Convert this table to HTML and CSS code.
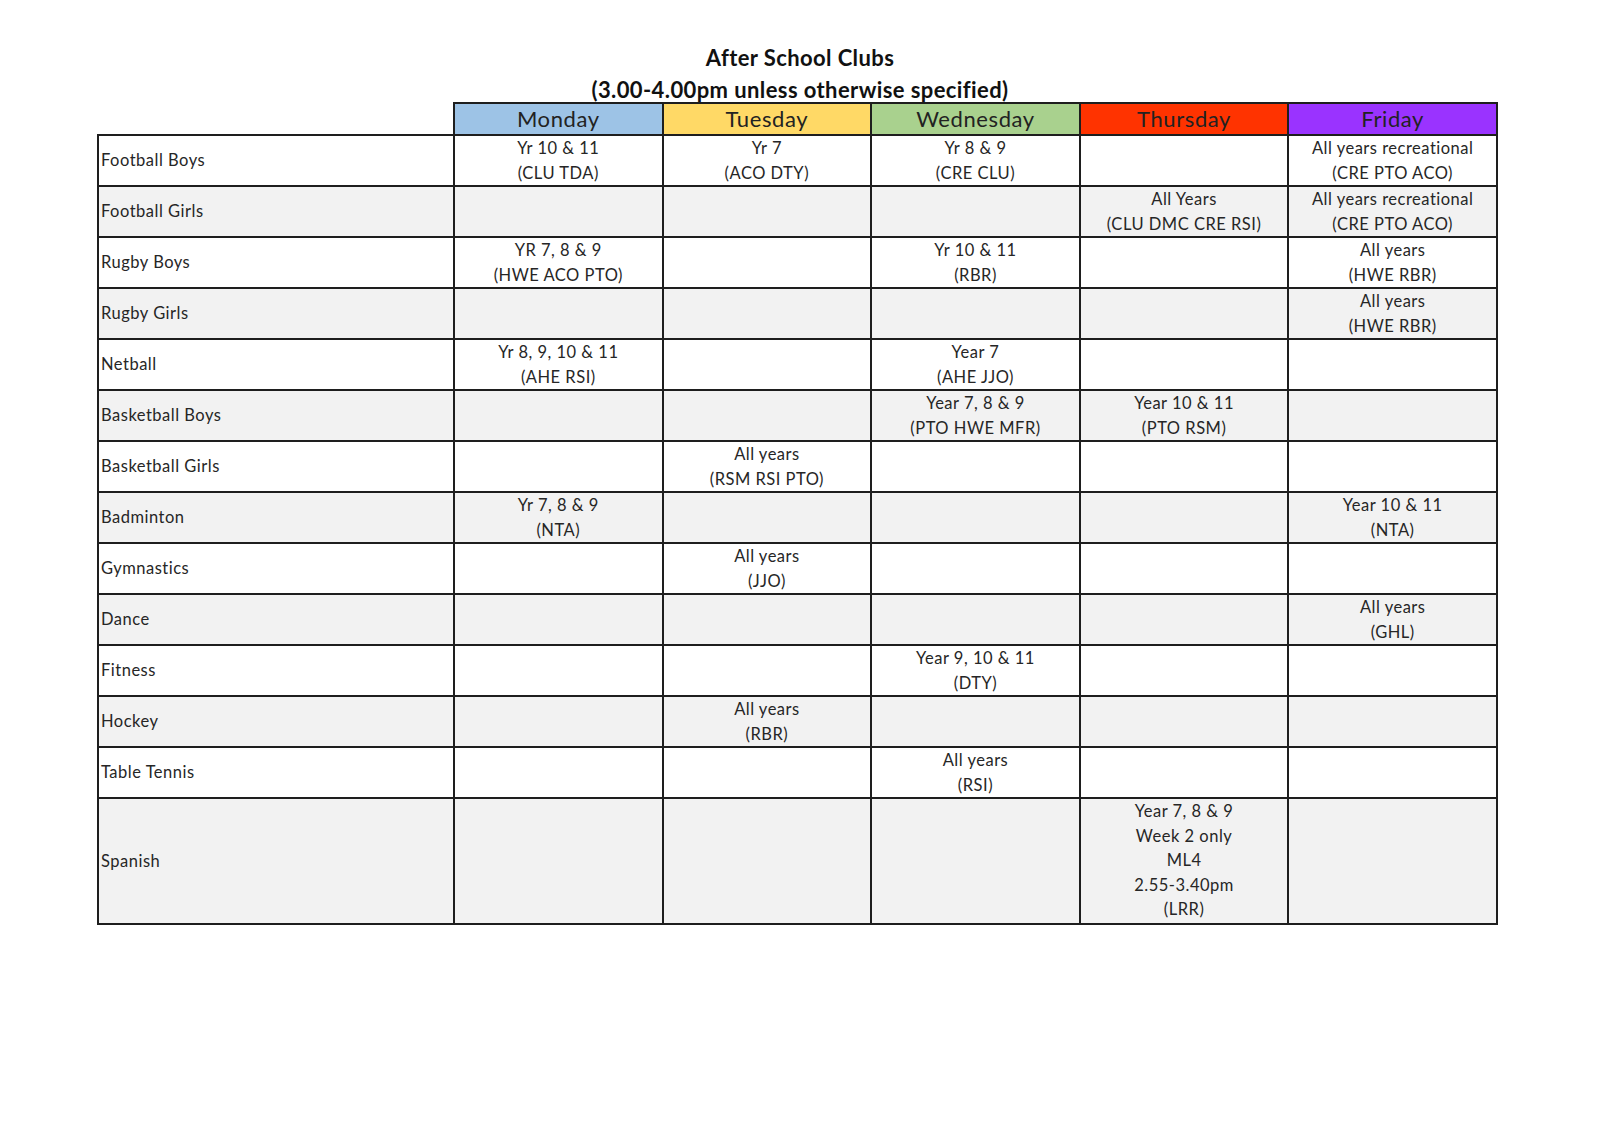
FILE: index.html
```html
<!DOCTYPE html>
<html lang="en">
<head>
<meta charset="utf-8">
<title>After School Clubs</title>
<link rel="stylesheet" href="styles.css">
</head>
<body>
<div class="sheet">
  <div class="title">
    <div>After School Clubs</div>
    <div>(3.00-4.00pm unless otherwise specified)</div>
  </div>
  <table class="clubs">
    <colgroup>
      <col class="c-label"><col class="c-day"><col class="c-day"><col class="c-day"><col class="c-day"><col class="c-day">
    </colgroup>
    <thead>
      <tr>
        <th class="corner"></th>
        <th class="mon">Monday</th>
        <th class="tue">Tuesday</th>
        <th class="wed">Wednesday</th>
        <th class="thu">Thursday</th>
        <th class="fri">Friday</th>
      </tr>
    </thead>
    <tbody>
      <tr><td class="label">Football Boys</td><td>Yr 10 &amp; 11<br>(CLU TDA)</td><td>Yr 7<br>(ACO DTY)</td><td>Yr 8 &amp; 9<br>(CRE CLU)</td><td></td><td>All years recreational<br>(CRE PTO ACO)</td></tr>
      <tr><td class="label">Football Girls</td><td></td><td></td><td></td><td>All Years<br>(CLU DMC CRE RSI)</td><td>All years recreational<br>(CRE PTO ACO)</td></tr>
      <tr><td class="label">Rugby Boys</td><td>YR 7, 8 &amp; 9<br>(HWE ACO PTO)</td><td></td><td>Yr 10 &amp; 11<br>(RBR)</td><td></td><td>All years<br>(HWE RBR)</td></tr>
      <tr><td class="label">Rugby Girls</td><td></td><td></td><td></td><td></td><td>All years<br>(HWE RBR)</td></tr>
      <tr><td class="label">Netball</td><td>Yr 8, 9, 10 &amp; 11<br>(AHE RSI)</td><td></td><td>Year 7<br>(AHE JJO)</td><td></td><td></td></tr>
      <tr><td class="label">Basketball Boys</td><td></td><td></td><td>Year 7, 8 &amp; 9<br>(PTO HWE MFR)</td><td>Year 10 &amp; 11<br>(PTO RSM)</td><td></td></tr>
      <tr><td class="label">Basketball Girls</td><td></td><td>All years<br>(RSM RSI PTO)</td><td></td><td></td><td></td></tr>
      <tr><td class="label">Badminton</td><td>Yr 7, 8 &amp; 9<br>(NTA)</td><td></td><td></td><td></td><td>Year 10 &amp; 11<br>(NTA)</td></tr>
      <tr><td class="label">Gymnastics</td><td></td><td>All years<br>(JJO)</td><td></td><td></td><td></td></tr>
      <tr><td class="label">Dance</td><td></td><td></td><td></td><td></td><td>All years<br>(GHL)</td></tr>
      <tr><td class="label">Fitness</td><td></td><td></td><td>Year 9, 10 &amp; 11<br>(DTY)</td><td></td><td></td></tr>
      <tr><td class="label">Hockey</td><td></td><td>All years<br>(RBR)</td><td></td><td></td><td></td></tr>
      <tr><td class="label">Table Tennis</td><td></td><td></td><td>All years<br>(RSI)</td><td></td><td></td></tr>
      <tr class="tall"><td class="label">Spanish</td><td></td><td></td><td></td><td>Year 7, 8 &amp; 9<br>Week 2 only<br>ML4<br>2.55-3.40pm<br>(LRR)</td><td></td></tr>
    </tbody>
  </table>
</div>
</body>
</html>
```
FILE: styles.css
```css
html, body {
  margin: 0;
  padding: 0;
  background: #ffffff;
}

body {
  font-family: "Lato", "Open Sans", "Liberation Sans", sans-serif;
  color: #1c1c1c;
}

.sheet {
  width: 1399px;
  margin-left: 97px;
  padding-top: 42px;
}

.title {
  text-align: center;
  font-weight: bold;
  font-size: 22px;
  letter-spacing: 0.4px;
  line-height: 31.5px;
  color: #111;
  padding-left: 7px;
  margin-bottom: -3px;
}

.clubs {
  border-collapse: collapse;
  table-layout: fixed;
  width: 1399px;
}

.c-label { width: 356px; }
.c-day { width: 208.6px; }

.clubs th {
  height: 30px;
  padding: 0;
  font-weight: normal;
  font-size: 22px;
  letter-spacing: 0.6px;
  line-height: 30px;
  text-align: center;
  border: 2px solid #1e1e1e;
  color: #222;
}

.clubs th.corner {
  border-top: none;
  border-left: none;
  background: transparent;
}

.mon { background: #9dc3e6; }
.tue { background: #ffd966; }
.wed { background: #a9d18e; }
.thu { background: #ff3300; }
.fri { background: #9a33ff; }

.clubs td {
  height: 48px;
  padding: 0;
  border: 2px solid #1e1e1e;
  text-align: center;
  vertical-align: top;
  font-size: 16.5px;
  letter-spacing: 0.5px;
  line-height: 24.5px;
  color: #262626;
}

.clubs tbody tr:nth-child(even) td {
  background: #f2f2f2;
}

.clubs td.label {
  text-align: left;
  vertical-align: middle;
  padding-left: 2px;
}

.clubs tr.tall td {
  height: 124px;
}
```
